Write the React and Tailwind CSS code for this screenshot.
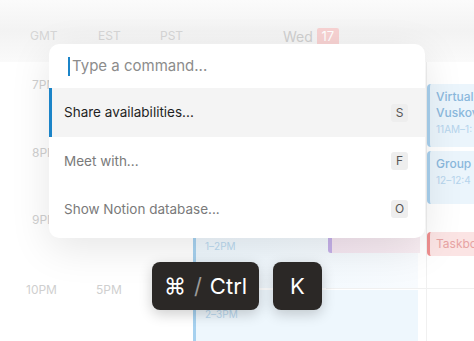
import React from 'react';

const font = { fontFamily: 'Inter, "Noto Sans", "Liberation Sans", sans-serif' };

function Kbd({ children }) {
  return (
    <span className="flex h-[18px] min-w-[17px] items-center justify-center rounded-[3px] bg-[#eeeeee] px-[3px] text-[12px] text-[#555]">
      {children}
    </span>
  );
}

function Row({ label, hotkey, active }) {
  return (
    <div
      className={
        active
          ? 'flex h-[49px] items-center justify-between border-l-[3px] border-[#1b84c8] bg-[#f4f4f4] pl-[12px] pr-[17px]'
          : 'flex h-[48px] items-center justify-between pl-[15px] pr-[17px]'
      }
    >
      <span className={active ? 'text-[13.5px] text-[#1f1f1f]' : 'text-[13.5px] text-[#7a7a7a]'}>{label}</span>
      <Kbd>{hotkey}</Kbd>
    </div>
  );
}

function CommandPalette() {
  return (
    <div className="absolute left-[49px] top-[44px] w-[376px] h-[194px] overflow-hidden rounded-[10px] bg-white shadow-[0_10px_40px_rgba(0,0,0,0.10)]">
      <div className="flex h-[44px] items-center pl-[19px]">
        <span className="mr-[2px] h-[19px] w-[2px] bg-[#1b84c8]" />
        <span className="text-[15px] text-[#8c8c8c]">Type a command...</span>
      </div>
      <Row label="Share availabilities..." hotkey="S" active />
      <Row label="Meet with..." hotkey="F" />
      <Row label="Show Notion database..." hotkey="O" />
    </div>
  );
}

function Keys() {
  const key = 'flex h-[48px] items-center justify-center rounded-[8px] bg-[#2b2826] text-[22px] text-white shadow-[0_4px_14px_rgba(0,0,0,0.2)]';
  return (
    <div className="absolute left-[152px] top-[262px] flex gap-[14px]">
      <div className={key + ' w-[107px] gap-[8px]'}>
        <span>⌘</span>
        <span className="text-[#9a9a9a]">/</span>
        <span>Ctrl</span>
      </div>
      <div className={key + ' w-[49px]'}>K</div>
    </div>
  );
}

function Calendar() {
  return (
    <div className="flex h-full flex-col">
      {/* header */}
      <div className="flex h-[62px] shrink-0 items-start bg-gradient-to-b from-[#fbfbfb] via-[#f3f3f3] to-[#fafafa] pl-[30px] pt-[27px] text-[12px] text-[#d6d6d6]">
        <span className="w-[68px]">GMT</span>
        <span className="w-[62px]">EST</span>
        <span className="w-[123px]">PST</span>
        <span className="flex items-center gap-[4px] -mt-[1px]">
          <span className="text-[14px] text-[#cfcfcf]">Wed</span>
          <span className="flex h-[18px] w-[22px] items-center justify-center rounded-[2px] bg-[#f7d2d2] text-[13px] text-white">17</span>
        </span>
      </div>

      <div className="flex min-h-0 flex-1 overflow-hidden">
        {/* time gutters */}
        <div className="flex w-[193px] shrink-0 flex-col pt-[15px] text-[12px] leading-[16px] text-[#cfcfcf]">
          <div className="h-[68px] shrink-0 pl-[32px]">7PM</div>
          <div className="h-[67px] shrink-0 pl-[32px]">8PM</div>
          <div className="h-[70px] shrink-0 pl-[32px]">9PM</div>
          <div className="flex shrink-0 gap-[39px] pl-[26px]">
            <span>10PM</span>
            <span>5PM</span>
          </div>
        </div>

        {/* Wed column: events sit at their times */}
        <div className="relative w-[233px] shrink-0">
          <div className="absolute left-0 top-[174px] w-[225px] h-[52px] border-l-[3px] border-[#a6d1ef] bg-gradient-to-r from-[#eef7fd] to-[#f8fbfe] pl-[9px] pt-[5px] text-[10px] leading-[10px] text-[#b9d8ef]">
            1–2PM
          </div>
          <div className="absolute left-0 top-[228px] bottom-0 w-[225px] border-l-[3px] border-[#a6d1ef] bg-[#eef7fd] pl-[9px] pt-[19px] text-[10px] leading-[10px] text-[#b9d8ef]">
            2–3PM
          </div>
          <div className="absolute left-[135px] top-[170px] w-[92px] h-[21px] rounded-l-[3px] border-l-[4px] border-[#c5b0e8] bg-gradient-to-r from-[#f5e6f1] to-[#f9eef3]" />
          <div className="absolute left-[133px] right-0 top-[226px] h-px bg-[#f0f0f0]" />
        </div>

        {/* next day column */}
        <div className="relative flex-1 border-l border-[#f0f0f0]">
          <div className="absolute left-0 top-[22px] w-[60px] h-[63px] rounded-l-[4px] border-l-[3px] border-[#a8d0ee] bg-[#ebf5fc] pl-[6px] pt-[5px] leading-[16px]">
            <div className="text-[12px] font-medium text-[#8ab8dc]">Virtual</div>
            <div className="text-[12px] font-medium text-[#8ab8dc]">Vuskov</div>
            <div className="text-[10px] text-[#b5d4ec]">11AM–1:</div>
          </div>
          <div className="absolute left-0 top-[89px] w-[60px] h-[53px] rounded-l-[4px] border-l-[3px] border-[#a8d0ee] bg-[#ebf5fc] pl-[6px] pt-[5px] leading-[16px]">
            <div className="text-[12px] font-medium text-[#8ab8dc]">Group</div>
            <div className="text-[10px] text-[#b5d4ec]">12–12:4</div>
          </div>
          <div className="absolute left-0 top-[170px] flex w-[60px] h-[24px] items-center rounded-l-[4px] border-l-[3px] border-[#ee8f8f] bg-[#fbe4e4] pl-[6px]">
            <span className="text-[12px] text-[#e7a3a3]">Taskbo</span>
          </div>
          <div className="absolute left-0 right-0 top-[226px] h-px bg-[#f0f0f0]" />
        </div>
      </div>
    </div>
  );
}

export default function App() {
  return (
    <div className="relative h-[341px] w-[474px] overflow-hidden bg-white" style={font}>
      <Calendar />
      <CommandPalette />
      <Keys />
    </div>
  );
}
